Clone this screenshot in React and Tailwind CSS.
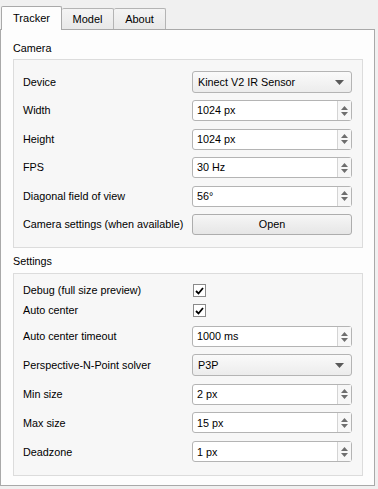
import React from "react";

const font = { fontFamily: '"Liberation Sans", Arial, sans-serif' };

function Combo({ value }) {
  return (
    <div className="relative flex h-[22px] w-[160px] items-center rounded-[3px] border border-[#b4b4b4] bg-gradient-to-b from-[#fafafa] to-[#ececec] pl-[5px] text-[10.8px] text-black">
      <span>{value}</span>
      <svg className="absolute right-[7px] top-[8px]" width="9" height="5" viewBox="0 0 9 5">
        <path d="M0 0 H9 L4.5 5 Z" fill="#5a5a5a" />
      </svg>
    </div>
  );
}

function Spin({ value }) {
  return (
    <div className="flex h-[21px] w-[160px] items-stretch rounded-[3px] border border-[#b4b4b4] bg-white text-[10.8px] text-black">
      <div className="flex flex-1 items-center pl-[4px]">{value}</div>
      <div className="flex w-[14px] flex-col items-center justify-center gap-[2px] border-l border-[#d4d4d4] bg-[#f7f7f7]">
        <svg width="7" height="4" viewBox="0 0 7 4">
          <path d="M0 4 H7 L3.5 0 Z" fill="#6e6e6e" />
        </svg>
        <svg width="7" height="4" viewBox="0 0 7 4">
          <path d="M0 0 H7 L3.5 4 Z" fill="#6e6e6e" />
        </svg>
      </div>
    </div>
  );
}

function Check() {
  return (
    <div className="ml-[1px] flex h-[13px] w-[13px] items-center justify-center border border-[#8a8a8a] bg-white">
      <svg width="9" height="8" viewBox="0 0 9 8">
        <path d="M1 4 L3.5 6.5 L8 1" stroke="#000" strokeWidth="1.8" fill="none" />
      </svg>
    </div>
  );
}

function Row({ label, children, h = "h-[22px]" }) {
  return (
    <div className={`flex ${h} items-center justify-between`}>
      <span className="text-[10.8px] text-black">{label}</span>
      <div className="w-[160px]">{children}</div>
    </div>
  );
}

export default function App() {
  return (
    <div className="h-[489px] w-[378px] bg-[#f0f0f0]" style={font}>
      <div className="flex h-[29px] items-end pl-[1px]">
        <div className="relative z-10 -mb-[1px] flex h-[24px] w-[61px] items-center justify-center rounded-t-[2px] border border-b-0 border-[#a9a9a9] bg-[#fdfdfd] text-[11px] text-black">
          Tracker
        </div>
        <div className="flex h-[21px] w-[52px] items-center justify-center rounded-t-[2px] border border-l-0 border-b-0 border-[#b4b4b4] bg-gradient-to-b from-[#f4f4f4] to-[#e8e8e8] text-[11px] text-black">
          Model
        </div>
        <div className="flex h-[21px] w-[52px] items-center justify-center rounded-t-[2px] border border-l-0 border-b-0 border-[#b4b4b4] bg-gradient-to-b from-[#f4f4f4] to-[#e8e8e8] text-[11px] text-black">
          About
        </div>
      </div>
      <div className="h-[457px] w-[375px] border border-[#a9a9a9] bg-[#fdfdfd] pl-[12px] pr-[11px]">
        <div className="flex h-[29px] items-center pt-[8px] text-[10.8px] text-black">Camera</div>
        <div className="flex flex-col gap-[6.5px] border border-[#dcdcdc] bg-[#f7f7f7] pb-[11px] pl-[9px] pr-[10px] pt-[11px]">
          <Row label="Device"><Combo value="Kinect V2 IR Sensor" /></Row>
          <Row label="Width"><Spin value="1024 px" /></Row>
          <Row label="Height"><Spin value="1024 px" /></Row>
          <Row label="FPS"><Spin value="30 Hz" /></Row>
          <Row label="Diagonal field of view"><Spin value="56°" /></Row>
          <Row label="Camera settings (when available)">
            <div className="flex h-[21px] w-[160px] items-center justify-center rounded-[3px] border border-[#adadad] bg-gradient-to-b from-[#f6f6f6] to-[#e6e6e6] text-[10.8px] text-black">
              Open
            </div>
          </Row>
        </div>
        <div className="flex h-[25px] items-center pt-[3px] text-[10.8px] text-black">Settings</div>
        <div className="flex flex-col border border-[#dcdcdc] bg-[#f7f7f7] pb-[12px] pl-[9px] pr-[10px] pt-[7px]">
          <Row label="Debug (full size preview)" h="h-[20px]"><Check /></Row>
          <Row label="Auto center" h="h-[20px]"><Check /></Row>
          <div className="mt-[5px]" />
          <div className="flex flex-col gap-[6.8px]">
            <Row label="Auto center timeout"><Spin value="1000 ms" /></Row>
            <Row label="Perspective-N-Point solver"><Combo value="P3P" /></Row>
            <Row label="Min size"><Spin value="2 px" /></Row>
            <Row label="Max size"><Spin value="15 px" /></Row>
            <Row label="Deadzone"><Spin value="1 px" /></Row>
          </div>
        </div>
      </div>
    </div>
  );
}
